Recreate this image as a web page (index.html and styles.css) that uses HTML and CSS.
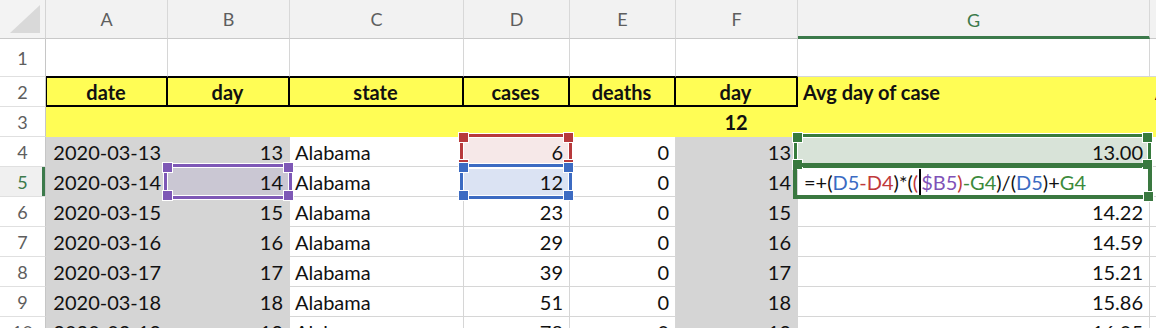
FILE: index.html
```html
<!DOCTYPE html>
<html lang="en">
<head>
<meta charset="utf-8">
<title>Sheet</title>
<link rel="stylesheet" href="styles.css">
</head>
<body>
<div class="sheet">
  <div class="corner"><svg width="45" height="38" viewBox="0 0 45 38"><polygon points="10,33 40,33 40,5" fill="#d9d9d9"/></svg></div>
  <div class="ch">A</div><div class="ch">B</div><div class="ch">C</div><div class="ch">D</div><div class="ch">E</div><div class="ch">F</div><div class="ch act">G</div><div class="ch"></div>

  <div class="rh">1</div>
  <div class="c above"></div><div class="c above"></div><div class="c above"></div><div class="c above"></div><div class="c above"></div><div class="c above"></div><div class="c"></div><div class="c"></div>

  <div class="rh">2</div>
  <div class="c th first">date</div><div class="c th">day</div><div class="c th">state</div><div class="c th">cases</div><div class="c th">deaths</div><div class="c th">day</div><div class="c y b">Avg day of case</div><div class="c y b">Avg</div>

  <div class="rh">3</div>
  <div class="c y"></div><div class="c y"></div><div class="c y"></div><div class="c y"></div><div class="c y"></div><div class="c y b ctr">12</div><div class="c y"></div><div class="c y"></div>

  <div class="rh">4</div>
  <div class="c g r">2020-03-13</div><div class="c g r">13</div><div class="c">Alabama</div><div class="c r pink">6</div><div class="c r">0</div><div class="c g r">13</div><div class="c r mint">13.00</div><div class="c"></div>

  <div class="rh cur-row">5</div>
  <div class="c g r">2020-03-14</div><div class="c r lilac">14</div><div class="c">Alabama</div><div class="c r sky">12</div><div class="c r">0</div><div class="c g r">14</div>
  <div class="c formula"><span>=+(</span><span class="fb">D5</span><span class="fr">-D4</span><span>)*(</span><span class="fr">(</span><span class="caret"></span><span class="fp">$B5</span><span class="fr">)</span><span class="fg">-G4</span><span>)/(</span><span class="fb">D5</span><span>)+</span><span class="fg">G4</span></div>
  <div class="c"></div>

  <div class="rh">6</div>
  <div class="c g r">2020-03-15</div><div class="c g r">15</div><div class="c">Alabama</div><div class="c r">23</div><div class="c r">0</div><div class="c g r">15</div><div class="c r">14.22</div><div class="c"></div>

  <div class="rh">7</div>
  <div class="c g r">2020-03-16</div><div class="c g r">16</div><div class="c">Alabama</div><div class="c r">29</div><div class="c r">0</div><div class="c g r">16</div><div class="c r">14.59</div><div class="c"></div>

  <div class="rh">8</div>
  <div class="c g r">2020-03-17</div><div class="c g r">17</div><div class="c">Alabama</div><div class="c r">39</div><div class="c r">0</div><div class="c g r">17</div><div class="c r">15.21</div><div class="c"></div>

  <div class="rh">9</div>
  <div class="c g r">2020-03-18</div><div class="c g r">18</div><div class="c">Alabama</div><div class="c r">51</div><div class="c r">0</div><div class="c g r">18</div><div class="c r">15.86</div><div class="c"></div>

  <div class="rh">10</div>
  <div class="c g r">2020-03-19</div><div class="c g r">19</div><div class="c">Alabama</div><div class="c r">78</div><div class="c r">0</div><div class="c g r">19</div><div class="c r">16.05</div><div class="c"></div>

  <div class="sel sel-d4 red"><span class="h tl"></span><span class="h tr"></span><span class="h bl"></span><span class="h br"></span></div>
  <div class="sel sel-d5 blue"><span class="h tl"></span><span class="h tr"></span><span class="h bl"></span><span class="h br"></span></div>
  <div class="sel sel-b5 purple"><span class="h tl"></span><span class="h tr"></span><span class="h bl"></span><span class="h br"></span></div>
  <div class="sel sel-g4 green"><span class="h tl"></span><span class="h tr"></span><span class="h bl"></span><span class="h br"></span></div>
  <div class="edit"><span class="fill"></span></div>
</div>
</body>
</html>
```
FILE: styles.css
```css
* { box-sizing: border-box; }
html, body { margin: 0; padding: 0; background: #fff; overflow: hidden; }
body { width: 1156px; height: 328px; }

.sheet {
  position: relative;
  display: grid;
  grid-template-columns: 46px 122px 122px 174px 106px 106px 122px 352px 1fr;
  grid-template-rows: 39px 38px 30px 30px 30px 30px 30px 30px 30px 30px 30px;
  width: 1156px;
  font-family: Lato, "Noto Sans", sans-serif;
  font-size: 20px;
  color: #111;
}

.corner {
  background: #f3f3f3;
  border-right: 1px solid #d4d4d4;
  border-bottom: 1px solid #c9c9c9;
}
.corner svg { display: block; }

.ch {
  background: #f2f2f2;
  border-right: 1px solid #d8d8d8;
  border-bottom: 1px solid #c9c9c9;
  display: flex;
  align-items: center;
  justify-content: center;
  font-size: 18px;
  color: #5e5e5e;
  padding-top: 0;
}
.ch.act {
  color: #3c7a4b;
  border-bottom: 3px solid #3c7a4b;
  padding-top: 3px;
}

.rh {
  background: #fff;
  border-right: 1px solid #c6c6c6;
  border-bottom: 1px solid #e0e0e0;
  display: flex;
  align-items: center;
  justify-content: center;
  font-size: 18px;
  color: #5e5e5e;
}
.rh.cur-row {
  background: #f0f0f0;
  color: #3c7a4b;
  box-shadow: inset -3px 0 0 #3c7a4b;
}

.c {
  border-right: 1px solid #d6d6d6;
  border-bottom: 1px solid #d6d6d6;
  display: flex;
  align-items: center;
  padding: 0 6px 0 5px;
  white-space: nowrap;
  overflow: hidden;
  line-height: 1;
}
.c.r { justify-content: flex-end; }
.c.ctr { justify-content: center; }
.c.b { font-weight: 700; }

.c.above { border-bottom-color: #000; }

.c.th {
  background: #fffd55;
  font-weight: 700;
  justify-content: center;
  border-top: 1px solid #000;
  border-right: 2px solid #000;
  border-bottom: 2px solid #000;
}
.c.th.first { border-left: 1px solid #000; }

.c.y { background: #fffd55; border-color: #fffd55; }
.c.g { background: #d5d5d5; border-color: #d5d5d5; }

.c.pink { background: #f6e8e8; }
.c.sky { background: #dbe3f3; }
.c.lilac { background: #cac7d3; border-color: #d5d5d5; }
.c.mint { background: #d8e3d8; }

.c.formula { padding-left: 6px; color: #111; }
.fb { color: #3a6bc3; }
.fr { color: #c0393b; }
.fp { color: #8052b8; }
.fg { color: #3b8a3b; }
.caret {
  display: inline-block;
  width: 2px;
  height: 26px;
  background: #000;
  margin: 0 0 0 1px;
}

/* reference-range highlight boxes */
.sel {
  position: absolute;
  border: 3px solid;
  box-shadow: 0 0 0 1px #fff, inset 0 0 0 1px #fff;
}
.sel .h {
  position: absolute;
  width: 11px;
  height: 11px;
  border: 1px solid #fff;
  background: currentColor;
}
.sel .tl { top: -5px; left: -5px; }
.sel .tr { top: -5px; right: -5px; }
.sel .bl { bottom: -5px; left: -5px; }
.sel .br { bottom: -5px; right: -5px; }

.red { color: #b73a3c; border-color: #b73a3c; }
.blue { color: #3c6bc2; border-color: #3c6bc2; }
.purple { color: #7e58b6; border-color: #7e58b6; }
.green { color: #377b3d; border-color: #377b3d; }

.sel-d4 { left: 460px; top: 134px; width: 112px; height: 34px; }
.sel-d5 { left: 460px; top: 164px; width: 112px; height: 35px; }
.sel-b5 { left: 164px; top: 164px; width: 128px; height: 35px; }
.sel-g4 { left: 794px; top: 134px; width: 357px; height: 34px; }

.edit {
  position: absolute;
  left: 793px;
  top: 163px;
  width: 359px;
  height: 36px;
  border: 4px solid #3a7840;
}
.edit .fill {
  position: absolute;
  right: -6px;
  bottom: -7px;
  width: 11px;
  height: 11px;
  background: #3a7840;
  border: 1px solid #fff;
}
```
